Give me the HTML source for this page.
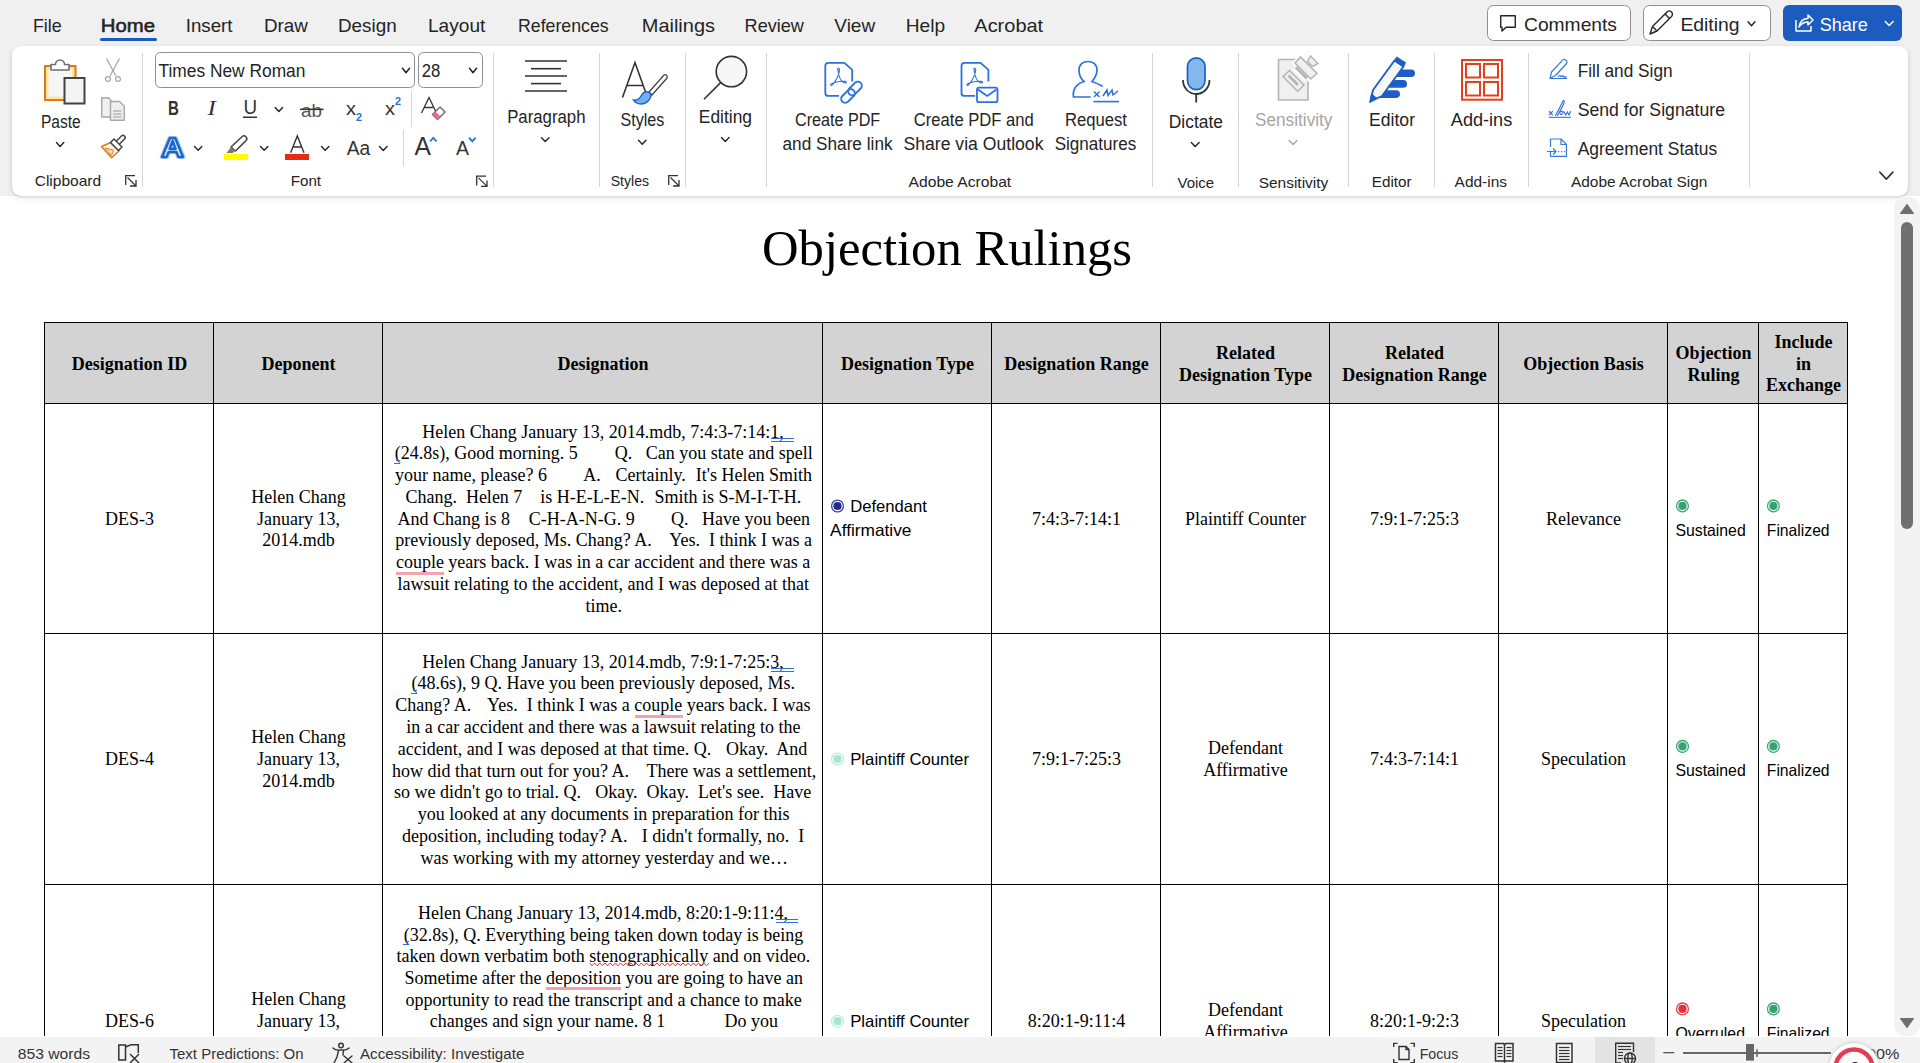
<!DOCTYPE html>
<html><head><meta charset="utf-8"><title>Objection Rulings - Word</title>
<style>
html,body{margin:0;padding:0;width:1920px;height:1063px;overflow:hidden;background:#ffffff;font-family:"Liberation Sans",sans-serif;}
#top{position:absolute;left:0;top:0;width:1920px;height:196px;background:#f0f0f0;}
#panel{position:absolute;left:12px;top:46px;width:1896px;height:150px;background:#ffffff;border-radius:9px;box-shadow:0 1px 3px rgba(0,0,0,0.16),0 3px 8px rgba(0,0,0,0.06);}
#docclip{position:absolute;left:0;top:196px;width:1894px;height:840px;overflow:hidden;background:#fff;}
#doc{position:absolute;left:0;top:-196px;width:1894px;height:1400px;}
#title{position:absolute;left:0;top:218px;width:1894px;text-align:center;font-family:"Liberation Serif",serif;font-size:50.67px;line-height:60px;color:#000;white-space:nowrap;}
.ln{position:absolute;white-space:pre;font-family:"Liberation Serif",serif;font-size:18px;line-height:21.75px;color:#000;}
.cl{position:absolute;white-space:pre;text-align:center;font-family:"Liberation Serif",serif;font-size:18px;line-height:21.75px;color:#000;}
.b{font-weight:bold;}
.hl{position:absolute;left:44px;width:1804px;height:1px;background:#000;}
.vl{position:absolute;top:322px;width:1px;height:1000px;background:#000;}
.dec{position:absolute;}
#shadow{position:absolute;left:12px;top:196px;width:1896px;height:10px;background:linear-gradient(rgba(0,0,0,0.05),rgba(0,0,0,0));}
</style></head><body>
<div id="docclip"><div id="doc">
<div id="title">Objection Rulings</div>
<div style="position:absolute;left:44px;top:322px;width:1804px;height:82px;background:#d3d3d3"></div>
<div class="hl" style="top:322px"></div>
<div class="hl" style="top:403px"></div>
<div class="hl" style="top:633px"></div>
<div class="hl" style="top:884px"></div>
<div class="hl" style="top:1157px"></div>
<div class="vl" style="left:44px"></div>
<div class="vl" style="left:213px"></div>
<div class="vl" style="left:382px"></div>
<div class="vl" style="left:822px"></div>
<div class="vl" style="left:991px"></div>
<div class="vl" style="left:1160px"></div>
<div class="vl" style="left:1329px"></div>
<div class="vl" style="left:1498px"></div>
<div class="vl" style="left:1667px"></div>
<div class="vl" style="left:1758px"></div>
<div class="vl" style="left:1847px"></div>
<div class="cl b" style="left:45.00px;width:169.00px;top:353.73px">Designation ID</div>
<div class="cl b" style="left:214.00px;width:169.00px;top:353.73px">Deponent</div>
<div class="cl b" style="left:383.00px;width:440.00px;top:353.73px">Designation</div>
<div class="cl b" style="left:823.00px;width:169.00px;top:353.73px">Designation Type</div>
<div class="cl b" style="left:992.00px;width:169.00px;top:353.73px">Designation Range</div>
<div class="cl b" style="left:1161.00px;width:169.00px;top:342.85px">Related</div>
<div class="cl b" style="left:1161.00px;width:169.00px;top:364.60px">Designation Type</div>
<div class="cl b" style="left:1330.00px;width:169.00px;top:342.85px">Related</div>
<div class="cl b" style="left:1330.00px;width:169.00px;top:364.60px">Designation Range</div>
<div class="cl b" style="left:1499.00px;width:169.00px;top:353.73px">Objection Basis</div>
<div class="cl b" style="left:1668.00px;width:91.00px;top:342.85px">Objection</div>
<div class="cl b" style="left:1668.00px;width:91.00px;top:364.60px">Ruling</div>
<div class="cl b" style="left:1759.00px;width:89.00px;top:331.98px">Include</div>
<div class="cl b" style="left:1759.00px;width:89.00px;top:353.73px">in</div>
<div class="cl b" style="left:1759.00px;width:89.00px;top:375.48px">Exchange</div>
<div class="cl" style="left:45.00px;width:169.00px;top:508.52px">DES-3</div>
<div class="cl" style="left:214.00px;width:169.00px;top:486.77px">Helen Chang</div>
<div class="cl" style="left:214.00px;width:169.00px;top:508.53px">January 13,</div>
<div class="cl" style="left:214.00px;width:169.00px;top:530.28px">2014.mdb</div>
<div class="cl" style="left:992.00px;width:169.00px;top:508.52px">7:4:3-7:14:1</div>
<div class="cl" style="left:1161.00px;width:169.00px;top:508.52px">Plaintiff Counter</div>
<div class="cl" style="left:1330.00px;width:169.00px;top:508.52px">7:9:1-7:25:3</div>
<div class="cl" style="left:1499.00px;width:169.00px;top:508.52px">Relevance</div>
<div class="cl" style="left:45.00px;width:169.00px;top:749.02px">DES-4</div>
<div class="cl" style="left:214.00px;width:169.00px;top:727.27px">Helen Chang</div>
<div class="cl" style="left:214.00px;width:169.00px;top:749.02px">January 13,</div>
<div class="cl" style="left:214.00px;width:169.00px;top:770.77px">2014.mdb</div>
<div class="cl" style="left:992.00px;width:169.00px;top:749.02px">7:9:1-7:25:3</div>
<div class="cl" style="left:1161.00px;width:169.00px;top:738.15px">Defendant</div>
<div class="cl" style="left:1161.00px;width:169.00px;top:759.90px">Affirmative</div>
<div class="cl" style="left:1330.00px;width:169.00px;top:749.02px">7:4:3-7:14:1</div>
<div class="cl" style="left:1499.00px;width:169.00px;top:749.02px">Speculation</div>
<div class="cl" style="left:45.00px;width:169.00px;top:1011.23px">DES-6</div>
<div class="cl" style="left:214.00px;width:169.00px;top:989.48px">Helen Chang</div>
<div class="cl" style="left:214.00px;width:169.00px;top:1011.23px">January 13,</div>
<div class="cl" style="left:214.00px;width:169.00px;top:1032.98px">2014.mdb</div>
<div class="cl" style="left:992.00px;width:169.00px;top:1011.23px">8:20:1-9:11:4</div>
<div class="cl" style="left:1161.00px;width:169.00px;top:1000.35px">Defendant</div>
<div class="cl" style="left:1161.00px;width:169.00px;top:1022.10px">Affirmative</div>
<div class="cl" style="left:1330.00px;width:169.00px;top:1011.23px">8:20:1-9:2:3</div>
<div class="cl" style="left:1499.00px;width:169.00px;top:1011.23px">Speculation</div>
<div class="ln" style="left:422.20px;top:421.60px">Helen Chang January 13, 2014.mdb, 7:4:3-7:14:1,</div>
<div class="ln" style="left:394.70px;top:443.35px">(24.8s), Good morning. 5</div>
<div class="ln" style="left:614.70px;top:443.35px">Q.</div>
<div class="ln" style="left:645.80px;top:443.35px">Can you state and spell</div>
<div class="ln" style="left:395.10px;top:465.10px">your name, please? 6</div>
<div class="ln" style="left:583.20px;top:465.10px">A.</div>
<div class="ln" style="left:615.50px;top:465.10px">Certainly.</div>
<div class="ln" style="left:695.70px;top:465.10px">It's Helen Smith</div>
<div class="ln" style="left:405.40px;top:486.85px">Chang.  Helen 7</div>
<div class="ln" style="left:540.30px;top:486.85px">is H-E-L-E-N.</div>
<div class="ln" style="left:654.40px;top:486.85px">Smith is S-M-I-T-H.</div>
<div class="ln" style="left:397.60px;top:508.60px">And Chang is 8</div>
<div class="ln" style="left:528.80px;top:508.60px">C-H-A-N-G. 9</div>
<div class="ln" style="left:671.00px;top:508.60px">Q.</div>
<div class="ln" style="left:702.00px;top:508.60px">Have you been</div>
<div class="ln" style="left:395.30px;top:530.35px">previously deposed, Ms. Chang? A.</div>
<div class="ln" style="left:669.30px;top:530.35px">Yes.  I think I was a</div>
<div class="ln" style="left:395.90px;top:552.10px">couple years back. I was in a car accident and there was a</div>
<div class="ln" style="left:397.60px;top:573.85px">lawsuit relating to the accident, and I was deposed at that</div>
<div class="ln" style="left:585.50px;top:595.60px">time.</div>
<div class="ln" style="left:422.20px;top:651.60px">Helen Chang January 13, 2014.mdb, 7:9:1-7:25:3,</div>
<div class="ln" style="left:411.60px;top:673.40px">(48.6s), 9 Q. Have you been previously deposed, Ms.</div>
<div class="ln" style="left:395.30px;top:695.20px">Chang? A.</div>
<div class="ln" style="left:487.00px;top:695.20px">Yes.  I think I was a couple years back. I was</div>
<div class="ln" style="left:406.20px;top:717.00px">in a car accident and there was a lawsuit relating to the</div>
<div class="ln" style="left:397.80px;top:738.80px">accident, and I was deposed at that time. Q.</div>
<div class="ln" style="left:726.00px;top:738.80px">Okay.  And</div>
<div class="ln" style="left:392.10px;top:760.60px">how did that turn out for you? A.</div>
<div class="ln" style="left:646.40px;top:760.60px">There was a settlement,</div>
<div class="ln" style="left:393.90px;top:782.40px">so we didn't go to trial. Q.</div>
<div class="ln" style="left:595.30px;top:782.40px">Okay.  Okay.  Let's see.  Have</div>
<div class="ln" style="left:417.70px;top:804.20px">you looked at any documents in preparation for this</div>
<div class="ln" style="left:402.00px;top:826.00px">deposition, including today? A.</div>
<div class="ln" style="left:641.80px;top:826.00px">I didn't formally, no.  I</div>
<div class="ln" style="left:420.50px;top:847.80px">was working with my attorney yesterday and we…</div>
<div class="ln" style="left:418.10px;top:902.80px">Helen Chang January 13, 2014.mdb, 8:20:1-9:11:4,</div>
<div class="ln" style="left:403.80px;top:924.50px">(32.8s), Q. Everything being taken down today is being</div>
<div class="ln" style="left:396.40px;top:946.20px">taken down verbatim both stenographically and on video.</div>
<div class="ln" style="left:404.50px;top:967.90px">Sometime after the deposition you are going to have an</div>
<div class="ln" style="left:405.50px;top:989.60px">opportunity to read the transcript and a chance to make</div>
<div class="ln" style="left:429.80px;top:1011.30px">changes and sign your name. 8 1</div>
<div class="ln" style="left:724.60px;top:1011.30px">Do you</div>
<div class="dec" style="left:771px;top:438px;width:23px;height:1px;background:#2e6fe2"></div>
<div class="dec" style="left:771px;top:441px;width:23px;height:1px;background:#2e6fe2"></div>
<div class="dec" style="left:771px;top:668px;width:23px;height:1px;background:#2e6fe2"></div>
<div class="dec" style="left:771px;top:671px;width:23px;height:1px;background:#2e6fe2"></div>
<div class="dec" style="left:776px;top:919px;width:22px;height:1px;background:#2e6fe2"></div>
<div class="dec" style="left:776px;top:922px;width:22px;height:1px;background:#2e6fe2"></div>
<div class="dec" style="left:396px;top:460px;width:4px;height:1px;background:#2e6fe2"></div>
<div class="dec" style="left:394px;top:463px;width:6px;height:1px;background:#2e6fe2"></div>
<div class="dec" style="left:413px;top:690px;width:4px;height:1px;background:#2e6fe2"></div>
<div class="dec" style="left:411px;top:693px;width:6px;height:1px;background:#2e6fe2"></div>
<div class="dec" style="left:405px;top:941px;width:4px;height:1px;background:#2e6fe2"></div>
<div class="dec" style="left:403px;top:944px;width:6px;height:1px;background:#2e6fe2"></div>
<div class="dec" style="left:395.9px;top:572.0px;width:48.1px;height:3px;background:#f3a2ae"></div>
<div class="dec" style="left:635.0px;top:715.0px;width:48.0px;height:3px;background:#f3a2ae"></div>
<div class="dec" style="left:546.0px;top:987.0px;width:74.8px;height:3px;background:#f3a2ae"></div>
<svg style="position:absolute;left:0;top:0" width="1920" height="1063"><polyline points="589.4,963.0 592.0,965.8 594.6,963.0 597.2,965.8 599.8,963.0 602.4,965.8 605.0,963.0 607.6,965.8 610.2,963.0 612.8,965.8 615.4,963.0 618.0,965.8 620.6,963.0 623.2,965.8 625.8,963.0 628.4,965.8 631.0,963.0 633.6,965.8 636.2,963.0 638.8,965.8 641.4,963.0 644.0,965.8 646.6,963.0 649.2,965.8 651.8,963.0 654.4,965.8 657.0,963.0 659.6,965.8 662.2,963.0 664.8,965.8 667.4,963.0 670.0,965.8 672.6,963.0 675.2,965.8 677.8,963.0 680.4,965.8 683.0,963.0 685.6,965.8 688.2,963.0 690.8,965.8 693.4,963.0 696.0,965.8 698.6,963.0 701.2,965.8 703.8,963.0 706.4,965.8 709.0,963.0" fill="none" stroke="#e0312b" stroke-width="1"/></svg>
<svg style="position:absolute;left:0;top:0" width="1920" height="1063">
<circle cx="837.5" cy="506.0" r="5.9" fill="#fff" stroke="#3848b0" stroke-width="1.3"/><circle cx="837.5" cy="506.0" r="4.1" fill="#27288a"/>
<text x="850.20" y="511.70" font-family="Liberation Sans" font-size="16.50" font-weight="normal" font-style="normal" fill="#000" textLength="76.80" lengthAdjust="spacingAndGlyphs">Defendant</text>
<text x="830.10" y="535.60" font-family="Liberation Sans" font-size="16.50" font-weight="normal" font-style="normal" fill="#000" textLength="81.40" lengthAdjust="spacingAndGlyphs">Affirmative</text>
<circle cx="837.5" cy="759.0" r="5.9" fill="#fff" stroke="#b9eedc" stroke-width="1.3"/><circle cx="837.5" cy="759.0" r="4.1" fill="#a9e6cf"/>
<text x="850.20" y="764.80" font-family="Liberation Sans" font-size="16.50" font-weight="normal" font-style="normal" fill="#000" textLength="118.79" lengthAdjust="spacingAndGlyphs">Plaintiff Counter</text>
<circle cx="837.5" cy="1021.2" r="5.9" fill="#fff" stroke="#b9eedc" stroke-width="1.3"/><circle cx="837.5" cy="1021.2" r="4.1" fill="#a9e6cf"/>
<text x="850.20" y="1026.90" font-family="Liberation Sans" font-size="16.50" font-weight="normal" font-style="normal" fill="#000" textLength="118.79" lengthAdjust="spacingAndGlyphs">Plaintiff Counter</text>
<circle cx="1682.5" cy="505.9" r="5.9" fill="#fff" stroke="#37a874" stroke-width="1.3"/><circle cx="1682.5" cy="505.9" r="4.1" fill="#34a36e"/>
<text x="1675.40" y="535.70" font-family="Liberation Sans" font-size="16.50" font-weight="normal" font-style="normal" fill="#000" textLength="70.31" lengthAdjust="spacingAndGlyphs">Sustained</text>
<circle cx="1773.4" cy="505.9" r="5.9" fill="#fff" stroke="#37a874" stroke-width="1.3"/><circle cx="1773.4" cy="505.9" r="4.1" fill="#34a36e"/>
<text x="1766.80" y="535.70" font-family="Liberation Sans" font-size="16.50" font-weight="normal" font-style="normal" fill="#000" textLength="62.79" lengthAdjust="spacingAndGlyphs">Finalized</text>
<circle cx="1682.5" cy="746.4" r="5.9" fill="#fff" stroke="#37a874" stroke-width="1.3"/><circle cx="1682.5" cy="746.4" r="4.1" fill="#34a36e"/>
<text x="1675.40" y="776.20" font-family="Liberation Sans" font-size="16.50" font-weight="normal" font-style="normal" fill="#000" textLength="70.31" lengthAdjust="spacingAndGlyphs">Sustained</text>
<circle cx="1773.4" cy="746.4" r="5.9" fill="#fff" stroke="#37a874" stroke-width="1.3"/><circle cx="1773.4" cy="746.4" r="4.1" fill="#34a36e"/>
<text x="1766.80" y="776.20" font-family="Liberation Sans" font-size="16.50" font-weight="normal" font-style="normal" fill="#000" textLength="62.79" lengthAdjust="spacingAndGlyphs">Finalized</text>
<circle cx="1682.5" cy="1008.9" r="5.9" fill="#fff" stroke="#e8404a" stroke-width="1.3"/><circle cx="1682.5" cy="1008.9" r="4.1" fill="#e03339"/>
<text x="1675.40" y="1039.40" font-family="Liberation Sans" font-size="16.50" font-weight="normal" font-style="normal" fill="#000" textLength="69.61" lengthAdjust="spacingAndGlyphs">Overruled</text>
<circle cx="1773.4" cy="1008.9" r="5.9" fill="#fff" stroke="#37a874" stroke-width="1.3"/><circle cx="1773.4" cy="1008.9" r="4.1" fill="#34a36e"/>
<text x="1766.80" y="1039.40" font-family="Liberation Sans" font-size="16.50" font-weight="normal" font-style="normal" fill="#000" textLength="62.79" lengthAdjust="spacingAndGlyphs">Finalized</text>
</svg>
</div></div>
<div id="top"></div>
<div id="panel"></div>
<svg width="1920" height="200" viewBox="0 0 1920 200" style="position:absolute;left:0;top:0">
<text x="33.00" y="31.70" font-family="Liberation Sans" font-size="18.50" font-weight="normal" font-style="normal" fill="#242424" textLength="28.68" lengthAdjust="spacingAndGlyphs">File</text>
<text x="100.80" y="31.70" font-family="Liberation Sans" font-size="18.50" font-weight="normal" font-style="normal" fill="#242424" textLength="54.20" lengthAdjust="spacingAndGlyphs" stroke="#242424" stroke-width="0.55">Home</text>
<text x="185.80" y="31.70" font-family="Liberation Sans" font-size="18.50" font-weight="normal" font-style="normal" fill="#242424" textLength="46.72" lengthAdjust="spacingAndGlyphs">Insert</text>
<text x="264.00" y="31.70" font-family="Liberation Sans" font-size="18.50" font-weight="normal" font-style="normal" fill="#242424" textLength="43.93" lengthAdjust="spacingAndGlyphs">Draw</text>
<text x="338.00" y="31.70" font-family="Liberation Sans" font-size="18.50" font-weight="normal" font-style="normal" fill="#242424" textLength="58.71" lengthAdjust="spacingAndGlyphs">Design</text>
<text x="428.00" y="31.70" font-family="Liberation Sans" font-size="18.50" font-weight="normal" font-style="normal" fill="#242424" textLength="57.30" lengthAdjust="spacingAndGlyphs">Layout</text>
<text x="518.00" y="31.70" font-family="Liberation Sans" font-size="18.50" font-weight="normal" font-style="normal" fill="#242424" textLength="90.68" lengthAdjust="spacingAndGlyphs">References</text>
<text x="641.75" y="31.70" font-family="Liberation Sans" font-size="18.50" font-weight="normal" font-style="normal" fill="#242424" textLength="73.26" lengthAdjust="spacingAndGlyphs">Mailings</text>
<text x="744.60" y="31.70" font-family="Liberation Sans" font-size="18.50" font-weight="normal" font-style="normal" fill="#242424" textLength="59.33" lengthAdjust="spacingAndGlyphs">Review</text>
<text x="834.30" y="31.70" font-family="Liberation Sans" font-size="18.50" font-weight="normal" font-style="normal" fill="#242424" textLength="40.84" lengthAdjust="spacingAndGlyphs">View</text>
<text x="905.80" y="31.70" font-family="Liberation Sans" font-size="18.50" font-weight="normal" font-style="normal" fill="#242424" textLength="39.39" lengthAdjust="spacingAndGlyphs">Help</text>
<text x="974.30" y="31.70" font-family="Liberation Sans" font-size="18.50" font-weight="normal" font-style="normal" fill="#242424" textLength="68.88" lengthAdjust="spacingAndGlyphs">Acrobat</text>
<rect x="100" y="38" width="57" height="3" rx="1.5" fill="#185abd"/>
<rect x="1487.5" y="5.5" width="143" height="35" rx="6" fill="#fff" stroke="#8f8f8f" stroke-width="1"/>
<path d="M1500.7,15.7 H1515.3 V27.3 H1506 L1502,31 V27.3 H1500.7 Z" fill="none" stroke="#242424" stroke-width="1.4" stroke-linejoin="round"/>
<text x="1524.00" y="30.90" font-family="Liberation Sans" font-size="19.00" font-weight="normal" font-style="normal" fill="#242424" textLength="92.99" lengthAdjust="spacingAndGlyphs">Comments</text>
<rect x="1643.5" y="5.5" width="127" height="35" rx="6" fill="#fff" stroke="#8f8f8f" stroke-width="1"/>
<g fill="none" stroke="#242424" stroke-width="1.4" stroke-linejoin="round"><path d="M1650,34 L1652.5,26.5 L1667,12 A2.6,2.6 0 0 1 1671.5,16.5 L1657,31 Z"/><line x1="1653" y1="27" x2="1656.5" y2="30.5"/><line x1="1665" y1="14" x2="1669.5" y2="18.5"/></g>
<text x="1680.40" y="31.00" font-family="Liberation Sans" font-size="19.00" font-weight="normal" font-style="normal" fill="#242424" textLength="59.20" lengthAdjust="spacingAndGlyphs">Editing</text>
<polyline points="1748.0,21.8 1751.5,25.8 1754.9,21.8" fill="none" stroke="#242424" stroke-width="1.4" stroke-linecap="round" stroke-linejoin="round"/>
<rect x="1783" y="5" width="119" height="36" rx="6" fill="#1c5cbe"/>
<g fill="none" stroke="#fff" stroke-width="1.5" stroke-linejoin="round"><path d="M1796,20 V31 H1811 V26"/><path d="M1799,27 C1800,21 1804,18.5 1808,18.5 V15 L1813,20 L1808,25 V22 C1804,22 1801,24 1799,27 Z"/></g>
<text x="1819.70" y="30.90" font-family="Liberation Sans" font-size="19.00" font-weight="normal" font-style="normal" fill="#ffffff" textLength="48.22" lengthAdjust="spacingAndGlyphs">Share</text>
<polyline points="1885.2,21.5 1889.2,25.5 1893.1,21.5" fill="none" stroke="#ffffff" stroke-width="1.5" stroke-linecap="round" stroke-linejoin="round"/>
<rect x="45" y="66" width="30.5" height="34" fill="#fbe6a3" stroke="#e0781b" stroke-width="2"/>
<rect x="48.5" y="69.5" width="23.5" height="27" fill="#f6f6f6"/>
<path d="M51,70 V64.5 H55.5 A4.5,4.5 0 0 1 64.5,64.5 H69 V70 Z" fill="#fff" stroke="#6e6e6e" stroke-width="1.6" stroke-linejoin="round"/>
<rect x="64.5" y="78" width="20" height="25.5" fill="#f4f4f4" stroke="#444" stroke-width="2"/>
<text x="41.00" y="127.80" font-family="Liberation Sans" font-size="17.50" font-weight="normal" font-style="normal" fill="#242424" textLength="39.70" lengthAdjust="spacingAndGlyphs">Paste</text>
<polyline points="56.5,142.5 60.1,146.5 63.8,142.5" fill="none" stroke="#242424" stroke-width="1.4" stroke-linecap="round" stroke-linejoin="round"/>
<g fill="none" stroke="#a8a8a8" stroke-width="1.3"><line x1="106.5" y1="58.5" x2="116" y2="76"/><line x1="119.5" y1="58.5" x2="110" y2="76"/><circle cx="108" cy="79" r="2.4"/><circle cx="118" cy="79" r="2.4"/></g>
<g fill="#efefef" stroke="#a8a8a8" stroke-width="1.4" stroke-linejoin="round"><path d="M101.7,97.7 H108.5 L111,100.5 V117 H101.7 Z"/><path d="M110.5,101.5 H119.5 L124.3,106.3 V120.3 H110.5 Z"/></g>
<g stroke="#a8a8a8" stroke-width="1.2"><line x1="113" y1="111" x2="121.5" y2="111"/><line x1="113" y1="114" x2="121.5" y2="114"/><line x1="113" y1="117" x2="121.5" y2="117"/></g>
<path d="M101.5,146.5 L110.5,142.5 L119,151 L111.5,157.8 Z" fill="#fdf3e6" stroke="#e0781b" stroke-width="1.5" stroke-linejoin="round"/>
<path d="M105,148 L111.5,155.5 L113.5,150 Z" fill="#fbd9a8" stroke="#e0781b" stroke-width="0.9"/>
<path d="M116.5,141 L121.5,136 A2.1,2.1 0 0 1 124.5,139 L119.5,144" fill="#fff" stroke="#444" stroke-width="1.5"/>
<path d="M110.5,142.5 L114,139 L122,147 L118.5,150.5 Z" fill="#fff" stroke="#444" stroke-width="1.5" stroke-linejoin="round"/>
<text x="34.70" y="185.80" font-family="Liberation Sans" font-size="15.00" font-weight="normal" font-style="normal" fill="#242424" textLength="66.51" lengthAdjust="spacingAndGlyphs">Clipboard</text>
<g fill="none" stroke="#333" stroke-width="1.3"><polyline points="125.7,185.0 125.7,175.7 135.0,175.7"/><line x1="127.5" y1="177.5" x2="136.0" y2="186.0"/><polyline points="136.0,180.0 136.0,186.0 130.0,186.0"/></g>
<rect x="142" y="53" width="1" height="134" fill="#d4d4d4"/>
<rect x="155.5" y="52.5" width="259" height="35" rx="5" fill="#fff" stroke="#8f8f8f" stroke-width="1"/>
<text x="158.50" y="77.00" font-family="Liberation Sans" font-size="18.00" font-weight="normal" font-style="normal" fill="#242424" textLength="146.90" lengthAdjust="spacingAndGlyphs">Times New Roman</text>
<polyline points="402.5,68.2 406.0,72.7 409.5,68.2" fill="none" stroke="#242424" stroke-width="1.5" stroke-linecap="round" stroke-linejoin="round"/>
<rect x="418.5" y="52.5" width="64" height="35" rx="5" fill="#fff" stroke="#8f8f8f" stroke-width="1"/>
<text x="421.70" y="76.60" font-family="Liberation Sans" font-size="18.00" font-weight="normal" font-style="normal" fill="#242424" textLength="18.60" lengthAdjust="spacingAndGlyphs">28</text>
<polyline points="469.5,68.2 473.0,72.7 476.5,68.2" fill="none" stroke="#242424" stroke-width="1.5" stroke-linecap="round" stroke-linejoin="round"/>
<text x="168.00" y="114.60" font-family="Liberation Sans" font-size="20.00" font-weight="bold" font-style="normal" fill="#333" textLength="10.90" lengthAdjust="spacingAndGlyphs">B</text>
<text x="207.62" y="114.60" font-family="Liberation Serif" font-size="20.00" font-weight="normal" font-style="italic" fill="#333" textLength="8.29" lengthAdjust="spacingAndGlyphs">I</text>
<text x="243.40" y="114.20" font-family="Liberation Sans" font-size="20.00" font-weight="normal" font-style="normal" fill="#333" textLength="13.59" lengthAdjust="spacingAndGlyphs">U</text>
<rect x="243" y="116.5" width="14" height="1.5" fill="#333"/>
<polyline points="275.2,107.5 278.9,111.5 282.5,107.5" fill="none" stroke="#242424" stroke-width="1.4" stroke-linecap="round" stroke-linejoin="round"/>
<text x="301.00" y="116.50" font-family="Liberation Sans" font-size="19.00" font-weight="normal" font-style="normal" fill="#555" textLength="21.00" lengthAdjust="spacingAndGlyphs">ab</text>
<rect x="300" y="108.6" width="23.6" height="1.5" fill="#333"/>
<text x="346.00" y="115.00" font-family="Liberation Sans" font-size="19.00" font-weight="normal" font-style="normal" fill="#333" textLength="10.00" lengthAdjust="spacingAndGlyphs">x</text>
<text x="356.00" y="120.90" font-family="Liberation Sans" font-size="11.00" font-weight="bold" font-style="normal" fill="#1f77d4" textLength="6.01" lengthAdjust="spacingAndGlyphs">2</text>
<text x="385.00" y="115.00" font-family="Liberation Sans" font-size="19.00" font-weight="normal" font-style="normal" fill="#333" textLength="10.00" lengthAdjust="spacingAndGlyphs">x</text>
<text x="395.00" y="105.00" font-family="Liberation Sans" font-size="11.00" font-weight="bold" font-style="normal" fill="#1f77d4" textLength="6.01" lengthAdjust="spacingAndGlyphs">2</text>
<rect x="411" y="91" width="1" height="36" fill="#d6d6d6"/>
<path d="M421.5,113 L429,97.5 L436.5,113 M424.5,107.5 H433" fill="none" stroke="#333" stroke-width="1.3"/>
<path d="M432.5,114.5 L440,107 L445,112 L437.5,119.5 Z" fill="#fff" stroke="#7b6f7b" stroke-width="1.6" stroke-linejoin="round"/>
<path d="M432.5,114.5 L435.5,111.5 L440.5,116.5 L437.5,119.5 Z" fill="#e86a8e"/>
<text x="161.3" y="157.3" font-family="Liberation Sans" font-weight="bold" font-size="28" fill="#a9cdf3" stroke="#a9cdf3" stroke-width="4.2" stroke-linejoin="round" textLength="22.4" lengthAdjust="spacingAndGlyphs">A</text>
<text x="161.3" y="157.3" font-family="Liberation Sans" font-weight="bold" font-size="28" fill="#ffffff" stroke="#1a66cc" stroke-width="2.3" stroke-linejoin="round" textLength="22.4" lengthAdjust="spacingAndGlyphs">A</text>
<polyline points="194.5,146.5 198.2,150.2 201.8,146.5" fill="none" stroke="#242424" stroke-width="1.4" stroke-linecap="round" stroke-linejoin="round"/>
<path d="M231,147 L242,136.8 A2.6,2.6 0 0 1 246,140.6 L235.5,151 Z" fill="#fff" stroke="#444" stroke-width="1.5" stroke-linejoin="round"/>
<path d="M226.5,153 L231,147 L235.5,151 L232.5,153 Z" fill="#7a7a7a"/>
<rect x="224" y="154" width="24" height="6" fill="#ffff00"/>
<polyline points="260.5,146.5 264.2,150.2 267.9,146.5" fill="none" stroke="#242424" stroke-width="1.4" stroke-linecap="round" stroke-linejoin="round"/>
<path d="M290.6,152.8 L297.3,136 L304,152.8 M292.8,147 H301.8" fill="none" stroke="#333" stroke-width="1.4"/>
<rect x="285" y="154" width="24" height="6" fill="#e52b11"/>
<polyline points="321.5,146.5 325.2,150.2 328.9,146.5" fill="none" stroke="#242424" stroke-width="1.4" stroke-linecap="round" stroke-linejoin="round"/>
<text x="346.80" y="155.40" font-family="Liberation Sans" font-size="20.00" font-weight="normal" font-style="normal" fill="#333" textLength="23.46" lengthAdjust="spacingAndGlyphs">Aa</text>
<polyline points="379.5,146.5 383.3,150.5 387.1,146.5" fill="none" stroke="#242424" stroke-width="1.4" stroke-linecap="round" stroke-linejoin="round"/>
<rect x="403" y="130" width="1" height="36" fill="#d6d6d6"/>
<text x="414.60" y="155.40" font-family="Liberation Sans" font-size="26.00" font-weight="normal" font-style="normal" fill="#333" textLength="16.39" lengthAdjust="spacingAndGlyphs">A</text>
<polyline points="430,141.5 433.3,137.8 436.6,141.5" fill="none" stroke="#1f77d4" stroke-width="1.8"/>
<text x="456.00" y="155.40" font-family="Liberation Sans" font-size="21.00" font-weight="normal" font-style="normal" fill="#333" textLength="12.99" lengthAdjust="spacingAndGlyphs">A</text>
<polyline points="469,137.6 472.3,141.3 475.6,137.6" fill="none" stroke="#1f77d4" stroke-width="1.8"/>
<text x="290.80" y="186.40" font-family="Liberation Sans" font-size="15.00" font-weight="normal" font-style="normal" fill="#242424" textLength="30.22" lengthAdjust="spacingAndGlyphs">Font</text>
<g fill="none" stroke="#333" stroke-width="1.3"><polyline points="476.7,185.4 476.7,176.1 486.0,176.1"/><line x1="478.5" y1="177.9" x2="487.0" y2="186.4"/><polyline points="487.0,180.4 487.0,186.4 481.0,186.4"/></g>
<rect x="493" y="53" width="1" height="134" fill="#d4d4d4"/>
<g stroke="#333" stroke-width="1.6">
<line x1="525" y1="61" x2="567" y2="61"/>
<line x1="531" y1="68.7" x2="561" y2="68.7"/>
<line x1="525" y1="76" x2="567" y2="76"/>
<line x1="531" y1="83.6" x2="561" y2="83.6"/>
<line x1="525" y1="91" x2="567" y2="91"/>
</g>
<text x="507.20" y="122.90" font-family="Liberation Sans" font-size="17.50" font-weight="normal" font-style="normal" fill="#242424" textLength="78.30" lengthAdjust="spacingAndGlyphs">Paragraph</text>
<polyline points="541.5,137.7 545.2,141.4 549.0,137.7" fill="none" stroke="#242424" stroke-width="1.4" stroke-linecap="round" stroke-linejoin="round"/>
<rect x="599" y="53" width="1" height="134" fill="#d4d4d4"/>
<path d="M622.5,97.4 L635,62.6 L647.5,97.4 M626.8,85.5 H643.3" fill="none" stroke="#333" stroke-width="1.6"/>
<path d="M649,92 L664,75 A2.2,2.2 0 0 1 667,78 L652,95 Z" fill="#fff" stroke="#444" stroke-width="1.3"/>
<path d="M633.5,100 C637,101 640,98 642,94.5 C644.5,91 649,91 650.5,94 C652,98 647,104 641,104 C638,104 635,102.5 633.5,100 Z" fill="#73aef0" stroke="#1a62c8" stroke-width="1.4"/>
<text x="620.50" y="125.80" font-family="Liberation Sans" font-size="17.50" font-weight="normal" font-style="normal" fill="#242424" textLength="43.81" lengthAdjust="spacingAndGlyphs">Styles</text>
<polyline points="638.5,140.2 642.2,144.3 646.0,140.2" fill="none" stroke="#242424" stroke-width="1.4" stroke-linecap="round" stroke-linejoin="round"/>
<text x="610.70" y="186.40" font-family="Liberation Sans" font-size="15.00" font-weight="normal" font-style="normal" fill="#242424" textLength="38.31" lengthAdjust="spacingAndGlyphs">Styles</text>
<g fill="none" stroke="#333" stroke-width="1.3"><polyline points="668.7,185.0 668.7,175.7 678.0,175.7"/><line x1="670.5" y1="177.5" x2="679.0" y2="186.0"/><polyline points="679.0,180.0 679.0,186.0 673.0,186.0"/></g>
<rect x="685" y="53" width="1" height="134" fill="#d4d4d4"/>
<circle cx="731.4" cy="71.6" r="15.2" fill="#f7f7f7" stroke="#333" stroke-width="1.6"/>
<line x1="704" y1="99.3" x2="720.6" y2="82.6" stroke="#333" stroke-width="1.6"/>
<text x="698.80" y="123.00" font-family="Liberation Sans" font-size="17.50" font-weight="normal" font-style="normal" fill="#242424" textLength="53.20" lengthAdjust="spacingAndGlyphs">Editing</text>
<polyline points="721.5,137.5 725.3,141.5 729.1,137.5" fill="none" stroke="#242424" stroke-width="1.4" stroke-linecap="round" stroke-linejoin="round"/>
<rect x="766" y="53" width="1" height="134" fill="#d4d4d4"/>
<path d="M839.0,95.9 H828.3 A3,3 0 0 1 825.3,92.9 V65.8 A3,3 0 0 1 828.3,62.8 H844.4 L852.2,69.9 V81.4" fill="none" stroke="#2a72de" stroke-width="1.8" stroke-linejoin="round"/><path d="M838.0,70.5 C836.6,67.8 839.6,67.3 839.5,70.3 C839.3,74.3 835.3,82.3 832.1,85.1 C830.6,86.4 829.9,84.2 832.3,83.3 C835.8,82.0 841.3,81.0 845.1,81.4 C847.3,81.8 846.3,83.2 844.3,82.7 C841.3,81.8 838.8,76.8 838.0,70.5 Z" fill="none" stroke="#2a72de" stroke-width="1.1" stroke-linejoin="round"/>
<g fill="none" stroke="#2a72de" stroke-width="1.9"><rect x="847" y="84.5" width="16" height="8" rx="4" transform="rotate(-45 855 88.5)"/><rect x="840" y="92" width="16" height="8" rx="4" transform="rotate(-45 848 96)"/></g>
<text x="795.00" y="125.80" font-family="Liberation Sans" font-size="17.50" font-weight="normal" font-style="normal" fill="#242424" textLength="85.19" lengthAdjust="spacingAndGlyphs">Create PDF</text>
<text x="782.50" y="149.90" font-family="Liberation Sans" font-size="17.50" font-weight="normal" font-style="normal" fill="#242424" textLength="110.07" lengthAdjust="spacingAndGlyphs">and Share link</text>
<path d="M975.2,95.9 H964.5 A3,3 0 0 1 961.5,92.9 V65.8 A3,3 0 0 1 964.5,62.8 H980.6 L988.4,69.9 V81.4" fill="none" stroke="#2a72de" stroke-width="1.8" stroke-linejoin="round"/><path d="M974.2,70.5 C972.8,67.8 975.8,67.3 975.7,70.3 C975.5,74.3 971.5,82.3 968.3,85.1 C966.8,86.4 966.1,84.2 968.5,83.3 C972.0,82.0 977.5,81.0 981.3,81.4 C983.5,81.8 982.5,83.2 980.5,82.7 C977.5,81.8 975.0,76.8 974.2,70.5 Z" fill="none" stroke="#2a72de" stroke-width="1.1" stroke-linejoin="round"/>
<rect x="977" y="87.7" width="20.5" height="14.5" rx="2" fill="#fff" stroke="#2a72de" stroke-width="1.8"/><polyline points="978,89.5 987.2,96 996.5,89.5" fill="none" stroke="#2a72de" stroke-width="1.8"/>
<text x="913.80" y="125.80" font-family="Liberation Sans" font-size="17.50" font-weight="normal" font-style="normal" fill="#242424" textLength="120.01" lengthAdjust="spacingAndGlyphs">Create PDF and</text>
<text x="903.50" y="149.90" font-family="Liberation Sans" font-size="17.50" font-weight="normal" font-style="normal" fill="#242424" textLength="139.94" lengthAdjust="spacingAndGlyphs">Share via Outlook</text>
<path d="M1073.5,97 H1090 M1073.5,97 C1072,88 1078,83 1084,81.5 C1080,78 1079,74 1079,70 C1079,64.5 1083,61.5 1088,61.5 C1093,61.5 1097,64.5 1097,70 C1097,74 1095,78 1092,81.5 C1095,82.5 1098,84 1102,86" fill="none" stroke="#2a72de" stroke-width="1.7" stroke-linecap="round"/>
<g fill="none" stroke="#2a72de" stroke-width="1.5"><line x1="1094" y1="91.5" x2="1099.5" y2="97"/><line x1="1099.5" y1="91.5" x2="1094" y2="97"/><path d="M1103,96 L1107,90 L1108,95.5 L1112,90 L1113,95 L1118,91"/></g>
<rect x="1093.5" y="100.8" width="25.5" height="1.6" fill="#2a72de"/>
<text x="1065.00" y="125.80" font-family="Liberation Sans" font-size="17.50" font-weight="normal" font-style="normal" fill="#242424" textLength="62.00" lengthAdjust="spacingAndGlyphs">Request</text>
<text x="1054.70" y="149.70" font-family="Liberation Sans" font-size="17.50" font-weight="normal" font-style="normal" fill="#242424" textLength="81.62" lengthAdjust="spacingAndGlyphs">Signatures</text>
<text x="908.60" y="187.20" font-family="Liberation Sans" font-size="15.00" font-weight="normal" font-style="normal" fill="#242424" textLength="102.61" lengthAdjust="spacingAndGlyphs">Adobe Acrobat</text>
<rect x="1152" y="53" width="1" height="134" fill="#d4d4d4"/>
<rect x="1187.5" y="57.8" width="17.5" height="31.8" rx="8.75" fill="#82b8ec" stroke="#1a62c2" stroke-width="1.7"/>
<path d="M1183,80 C1183,88 1189,94 1196.2,94 C1203.4,94 1209.5,88 1209.5,80" fill="none" stroke="#333" stroke-width="1.8"/>
<line x1="1196.2" y1="94" x2="1196.2" y2="102.5" stroke="#333" stroke-width="1.8"/>
<text x="1168.80" y="127.50" font-family="Liberation Sans" font-size="17.50" font-weight="normal" font-style="normal" fill="#242424" textLength="54.20" lengthAdjust="spacingAndGlyphs">Dictate</text>
<polyline points="1191.3,142.5 1195.2,146.5 1199.2,142.5" fill="none" stroke="#242424" stroke-width="1.4" stroke-linecap="round" stroke-linejoin="round"/>
<text x="1177.50" y="187.50" font-family="Liberation Sans" font-size="15.00" font-weight="normal" font-style="normal" fill="#242424" textLength="36.68" lengthAdjust="spacingAndGlyphs">Voice</text>
<rect x="1238" y="53" width="1" height="134" fill="#d4d4d4"/>
<path d="M1296,59.5 H1278.5 V100 H1308 V81.5" fill="#f0f0f0" stroke="#b5b5b5" stroke-width="1.6"/>
<path d="M1296,59.5 H1300 L1308,70 V81.5 L1298,81 Z" fill="#f0f0f0"/>
<polygon points="1300.6,57 1316.9,73.3 1310.8,79 1295,63" fill="#f0f0f0" stroke="#fff" stroke-width="5"/>
<line x1="1294.5" y1="67.5" x2="1306.5" y2="79.5" stroke="#fff" stroke-width="6"/>
<polygon points="1300.6,57 1316.9,73.3 1310.8,79 1295,63" fill="#f0f0f0" stroke="#b5b5b5" stroke-width="1.6"/>
<line x1="1295.8" y1="67.2" x2="1307" y2="78.4" stroke="#b5b5b5" stroke-width="3"/>
<polygon points="1307.5,61.5 1310.5,56 1317.8,63.5 1312.5,66.5" fill="#f0f0f0" stroke="#b5b5b5" stroke-width="1.5"/>
<polygon points="1283,76.6 1289.5,70.5 1304,85 1297.7,91.3" fill="none" stroke="#b5b5b5" stroke-width="1.5"/>
<line x1="1288.5" y1="75.5" x2="1298" y2="85" stroke="#b5b5b5" stroke-width="2.6"/>
<text x="1255.00" y="125.80" font-family="Liberation Sans" font-size="17.50" font-weight="normal" font-style="normal" fill="#a6a6a6" textLength="77.48" lengthAdjust="spacingAndGlyphs">Sensitivity</text>
<polyline points="1289.2,140.5 1293.1,144.5 1297.0,140.5" fill="none" stroke="#a6a6a6" stroke-width="1.4" stroke-linecap="round" stroke-linejoin="round"/>
<text x="1258.70" y="187.50" font-family="Liberation Sans" font-size="15.00" font-weight="normal" font-style="normal" fill="#242424" textLength="69.59" lengthAdjust="spacingAndGlyphs">Sensitivity</text>
<rect x="1348" y="53" width="1" height="134" fill="#d4d4d4"/>
<g fill="#1e5ec4"><rect x="1388" y="69.4" width="27" height="7.6" rx="3.8"/><rect x="1380" y="80.1" width="27" height="7.6" rx="3.8"/><rect x="1372" y="90.3" width="28" height="7.6" rx="3.8"/></g>
<path d="M1370.5,101.5 L1373,90 L1394.5,60.5 L1403.5,66.5 L1382,96 Z" fill="#f6f6f6" stroke="#1e5ec4" stroke-width="1.9" stroke-linejoin="round"/>
<path d="M1394.5,60.5 L1396.8,57.2 L1405.3,62.8 L1403.5,66.5 Z" fill="#1e5ec4" stroke="#1e5ec4" stroke-width="1.2"/>
<path d="M1369.8,102.6 L1371.5,94 L1376.5,98 Z" fill="#1e5ec4" stroke="#1e5ec4" stroke-width="1"/>
<text x="1369.00" y="125.70" font-family="Liberation Sans" font-size="17.50" font-weight="normal" font-style="normal" fill="#242424" textLength="46.00" lengthAdjust="spacingAndGlyphs">Editor</text>
<text x="1371.80" y="187.20" font-family="Liberation Sans" font-size="15.00" font-weight="normal" font-style="normal" fill="#242424" textLength="39.80" lengthAdjust="spacingAndGlyphs">Editor</text>
<rect x="1434" y="53" width="1" height="134" fill="#d4d4d4"/>
<g fill="none" stroke="#e3401b" stroke-width="2"><rect x="1462" y="60" width="40" height="39.7"/><rect x="1466" y="64" width="14" height="13.5"/><rect x="1484" y="64" width="14" height="13.5"/><rect x="1466" y="82" width="14" height="13.5"/><rect x="1484" y="82" width="14" height="13.5"/></g>
<text x="1450.80" y="125.70" font-family="Liberation Sans" font-size="17.50" font-weight="normal" font-style="normal" fill="#242424" textLength="61.41" lengthAdjust="spacingAndGlyphs">Add-ins</text>
<text x="1454.60" y="187.20" font-family="Liberation Sans" font-size="15.00" font-weight="normal" font-style="normal" fill="#242424" textLength="52.41" lengthAdjust="spacingAndGlyphs">Add-ins</text>
<rect x="1528" y="53" width="1" height="134" fill="#d4d4d4"/>
<g fill="none" stroke="#3a78d8" stroke-width="1.2" stroke-linejoin="round"><path d="M1550,78.5 L1551.5,72 L1562,60.8 A1.8,1.8 0 0 1 1566.5,63.5 L1556,75 L1550,78.5 H1567"/><path d="M1558,77 C1559,75 1561,75 1561,77 C1562,75.5 1564,75.5 1564,77.5 C1565,76 1566,76.5 1566.5,77.5"/></g>
<text x="1577.70" y="77.00" font-family="Liberation Sans" font-size="17.50" font-weight="normal" font-style="normal" fill="#242424" textLength="94.91" lengthAdjust="spacingAndGlyphs">Fill and Sign</text>
<g fill="none" stroke="#3a78d8" stroke-width="1.2" stroke-linecap="round"><line x1="1549.3" y1="111.5" x2="1552.5" y2="114.8"/><line x1="1552.5" y1="111.5" x2="1549.3" y2="114.8"/><path d="M1555.5,115.5 C1558,111 1561.5,104.5 1562.5,102 C1563.5,99.5 1565,100.5 1563.8,103.5 C1562,108 1559.5,112 1557.5,115.5 M1558.5,113.5 C1560.5,111 1563,110.5 1563,112.5 C1563,114.2 1561,114.8 1560.3,114 M1564,111.8 L1565.8,115 L1567.4,112 L1569,115 L1570.6,111.5"/></g><rect x="1548.8" y="116.8" width="21.9" height="1.1" fill="#3a78d8"/>
<text x="1577.70" y="116.20" font-family="Liberation Sans" font-size="17.50" font-weight="normal" font-style="normal" fill="#242424" textLength="147.28" lengthAdjust="spacingAndGlyphs">Send for Signature</text>
<g fill="none" stroke="#3a78d8" stroke-width="1.2" stroke-linejoin="round"><path d="M1550.5,147 V139 H1561 L1566.5,144.5 V156.3 H1550.5 V152"/><path d="M1561,139 V144.5 H1566.5"/><path d="M1547,151.5 H1556 M1553,148.5 L1556,151.5 L1553,154.5"/></g><g fill="#3a78d8"><rect x="1558" y="151" width="1.2" height="1.2"/><rect x="1561" y="151" width="1.2" height="1.2"/><rect x="1564" y="151" width="1.2" height="1.2"/></g>
<text x="1577.70" y="155.00" font-family="Liberation Sans" font-size="17.50" font-weight="normal" font-style="normal" fill="#242424" textLength="139.49" lengthAdjust="spacingAndGlyphs">Agreement Status</text>
<text x="1571.00" y="187.20" font-family="Liberation Sans" font-size="15.00" font-weight="normal" font-style="normal" fill="#242424" textLength="136.40" lengthAdjust="spacingAndGlyphs">Adobe Acrobat Sign</text>
<rect x="1749" y="53" width="1" height="134" fill="#d4d4d4"/>
<polyline points="1879.8,172.1 1886.3,179.1 1892.9,172.1" fill="none" stroke="#333" stroke-width="1.6" stroke-linecap="round" stroke-linejoin="round"/>
</svg>
<svg width="1920" height="1063" style="position:absolute;left:0;top:0">
<path d="M1894,1036 V208 A11,11 0 0 1 1905,197 H1909 A11,11 0 0 1 1920,208 V1025 A11,11 0 0 1 1909,1036 H1905 A11,11 0 0 1 1894,1025 Z" fill="#f3f3f3"/>
<path d="M1907,204.5 L1913.5,213.5 H1900.5 Z" fill="#707070" stroke="#707070" stroke-width="1.2" stroke-linejoin="round"/>
<rect x="1901" y="222" width="12" height="307" rx="6" fill="#707070"/>
<path d="M1907,1027.5 L1913.5,1018.5 H1900.5 Z" fill="#707070" stroke="#707070" stroke-width="1.2" stroke-linejoin="round"/>
<rect x="0" y="1037" width="1920" height="26" fill="#f3f3f3"/>
<text x="17.70" y="1058.70" font-family="Liberation Sans" font-size="15.50" font-weight="normal" font-style="normal" fill="#333333" textLength="72.38" lengthAdjust="spacingAndGlyphs">853 words</text>
<g fill="none" stroke="#333" stroke-width="1.5"><path d="M118.8,1045 H125.5 V1060 H118.8 Z"/><path d="M125.5,1047 L131,1044.7 H138.3 V1053"/><line x1="130" y1="1054" x2="139" y2="1063"/><line x1="139" y1="1054" x2="130" y2="1063"/></g>
<text x="169.50" y="1058.70" font-family="Liberation Sans" font-size="15.50" font-weight="normal" font-style="normal" fill="#333333" textLength="134.12" lengthAdjust="spacingAndGlyphs">Text Predictions: On</text>
<g fill="none" stroke="#333" stroke-width="1.4" stroke-linecap="round"><circle cx="341" cy="1045.5" r="2.3"/><path d="M333,1048 C336,1051 338,1050 341,1050 C344,1050 346,1051 349,1048"/><path d="M338.5,1050.5 L337,1057 L334,1063"/><path d="M343.5,1050.5 L343,1055"/><line x1="344" y1="1056" x2="352" y2="1063"/><line x1="352" y1="1056" x2="344" y2="1063"/></g>
<text x="360.00" y="1058.70" font-family="Liberation Sans" font-size="15.50" font-weight="normal" font-style="normal" fill="#333333" textLength="164.41" lengthAdjust="spacingAndGlyphs">Accessibility: Investigate</text>
<g fill="none" stroke="#333" stroke-width="1.4"><path d="M1393.7,1047 V1043.4 H1397.5 M1410.5,1043.4 H1414.3 V1047 M1393.7,1059 V1062.6 H1397.5 M1414.3,1059 V1062.6 H1410.5"/><path d="M1399,1046.5 H1406 L1409,1049.5 V1059.5 H1399 Z"/><path d="M1406,1046.5 V1049.5 H1409"/></g>
<text x="1419.70" y="1058.50" font-family="Liberation Sans" font-size="15.50" font-weight="normal" font-style="normal" fill="#333333" textLength="38.61" lengthAdjust="spacingAndGlyphs">Focus</text>
<g fill="none" stroke="#333" stroke-width="1.5"><path d="M1495.5,1043.5 H1503.5 L1504.5,1045 L1505.5,1043.5 H1513 V1061 H1505.5 L1504.5,1062 L1503.5,1061 H1495.5 Z"/><line x1="1504.5" y1="1045" x2="1504.5" y2="1061"/></g>
<g stroke="#333" stroke-width="1.2"><line x1="1497.5" y1="1047.5" x2="1502.5" y2="1047.5"/><line x1="1506.5" y1="1047.5" x2="1511.5" y2="1047.5"/><line x1="1497.5" y1="1050.5" x2="1502.5" y2="1050.5"/><line x1="1506.5" y1="1050.5" x2="1511.5" y2="1050.5"/><line x1="1497.5" y1="1053.5" x2="1502.5" y2="1053.5"/><line x1="1506.5" y1="1053.5" x2="1511.5" y2="1053.5"/><line x1="1497.5" y1="1056.5" x2="1502.5" y2="1056.5"/><line x1="1506.5" y1="1056.5" x2="1511.5" y2="1056.5"/></g>
<g fill="none" stroke="#333" stroke-width="1.5"><rect x="1556.5" y="1043.5" width="15.5" height="19"/></g>
<g stroke="#333" stroke-width="1.2"><line x1="1559" y1="1047.5" x2="1569.5" y2="1047.5"/><line x1="1559" y1="1050.5" x2="1569.5" y2="1050.5"/><line x1="1559" y1="1053.5" x2="1569.5" y2="1053.5"/><line x1="1559" y1="1056.5" x2="1569.5" y2="1056.5"/><line x1="1559" y1="1059.5" x2="1569.5" y2="1059.5"/></g>
<rect x="1595" y="1037" width="60" height="26" fill="#e3e3e3"/>
<g fill="none" stroke="#333" stroke-width="1.4"><path d="M1621,1063 H1615.7 V1043.3 H1633.5 V1052"/><circle cx="1630" cy="1058.5" r="5.5"/><ellipse cx="1630" cy="1058.5" rx="2.2" ry="5.5"/><line x1="1624.5" y1="1058.5" x2="1635.5" y2="1058.5"/></g>
<g stroke="#333" stroke-width="1.1"><line x1="1618" y1="1046.5" x2="1631" y2="1046.5"/><line x1="1618" y1="1049.5" x2="1631" y2="1049.5"/><line x1="1618" y1="1052.5" x2="1623" y2="1052.5"/><line x1="1618" y1="1055.5" x2="1623" y2="1055.5"/><line x1="1618" y1="1058.5" x2="1623" y2="1058.5"/></g>
<rect x="1663.3" y="1052" width="11" height="1.3" fill="#555"/>
<rect x="1683" y="1052" width="148" height="2" fill="#666"/>
<rect x="1746" y="1044" width="8" height="16.6" fill="#666"/>
<rect x="1756.2" y="1049.4" width="1.6" height="7.5" fill="#666"/>
<text x="1858.00" y="1058.50" font-family="Liberation Sans" font-size="15.50" font-weight="normal" font-style="normal" fill="#333333" textLength="41.40" lengthAdjust="spacingAndGlyphs">100%</text>
<defs><filter id="sh" x="-50%" y="-50%" width="200%" height="200%"><feGaussianBlur stdDeviation="1.5"/></filter></defs>
<circle cx="1854" cy="1068" r="26" fill="#cfcfcf" filter="url(#sh)"/>
<circle cx="1854" cy="1068" r="25" fill="#ffffff"/>
<circle cx="1854" cy="1068" r="18.5" fill="none" stroke="#e63a55" stroke-width="4.5"/>
<circle cx="1855" cy="1066" r="4" fill="#1b1f4a"/>
</svg>
</body></html>
